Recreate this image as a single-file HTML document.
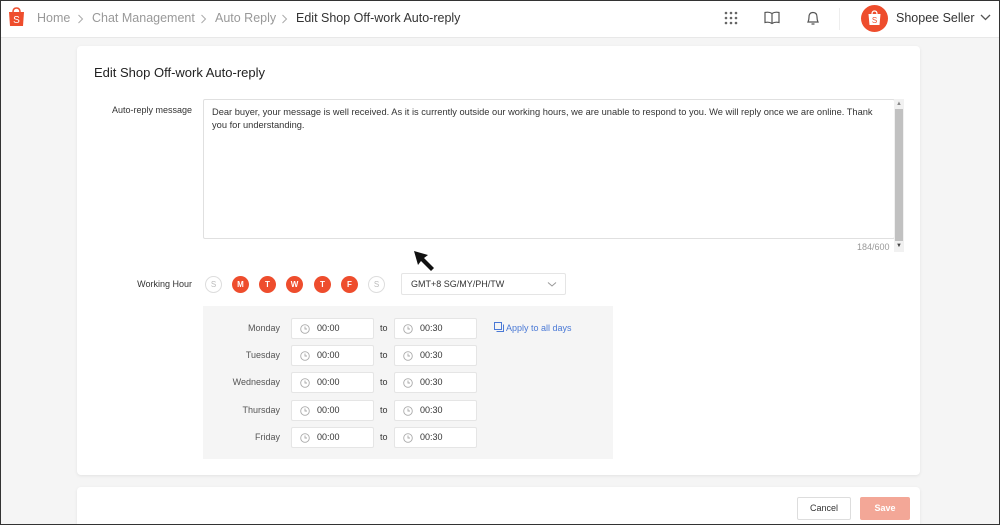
<!DOCTYPE html>
<html><head><meta charset="utf-8"><style>
*{margin:0;padding:0;box-sizing:border-box}
html,body{width:1000px;height:525px;overflow:hidden}
body{background:#f5f5f5;font-family:"Liberation Sans",Arial,sans-serif;position:relative}
.a{position:absolute}
.hdr{left:0;top:0;width:1000px;height:38px;background:#fff;border-bottom:1px solid #e8e8e8}
.bc{top:11px;font-size:12.5px;color:#999}
.chev{top:11px;font-size:12px;color:#aaa}
.card{background:#fff;border-radius:4px;box-shadow:0 1px 3px rgba(0,0,0,.08)}
.lbl{font-size:9px;color:#333;text-align:right;width:110px}
.d{width:17px;height:17px;border-radius:50%;font-size:8px;font-weight:bold;text-align:center;line-height:17px;color:#fff;background:#ee4d2d;top:276px}
.d.o{background:#fff;border:1px solid #ddd;color:#bbb;font-weight:normal;line-height:15px}
.inp{width:83px;height:21px;background:#fff;border:1px solid #e5e5e5;border-radius:2px;font-size:9px;color:#333;line-height:19px;padding-left:25px}
.inp svg{position:absolute;left:8px;top:5px}
.day{font-size:9px;color:#555;text-align:right;width:80px;left:200px}
.to{font-size:9px;color:#333;left:380px}
.frame{left:0;top:0;width:1000px;height:525px;border:1px solid #333;pointer-events:none}
</style></head><body>
<div class="a hdr"></div>
<svg class="a" style="left:8px;top:7px" width="17" height="20" viewBox="0 0 17 20"><path d="M5 5 Q5 1 8.5 1 Q12 1 12 5" fill="none" stroke="#ee4d2d" stroke-width="1.5"/><path d="M1 5 H16 L15 19 H2 Z" fill="#ee4d2d"/><text x="8.5" y="16" font-size="10" fill="#fff" text-anchor="middle" font-family="Liberation Sans">S</text></svg>
<div class="a bc" style="left:37px">Home</div>
<svg class="a" style="left:77px;top:14px" width="7" height="10"><path d="M1.5 1 L5.5 5 L1.5 9" fill="none" stroke="#aaa" stroke-width="1"/></svg>
<div class="a bc" style="left:92px">Chat Management</div>
<svg class="a" style="left:200px;top:14px" width="7" height="10"><path d="M1.5 1 L5.5 5 L1.5 9" fill="none" stroke="#aaa" stroke-width="1"/></svg>
<div class="a bc" style="left:215px">Auto Reply</div>
<svg class="a" style="left:281px;top:14px" width="7" height="10"><path d="M1.5 1 L5.5 5 L1.5 9" fill="none" stroke="#aaa" stroke-width="1"/></svg>
<div class="a bc" style="left:296px;color:#333">Edit Shop Off-work Auto-reply</div>
<svg class="a" style="left:724px;top:11px" width="14" height="14"><g fill="#666"><circle cx="2" cy="2" r="1.3"/><circle cx="7" cy="2" r="1.3"/><circle cx="12" cy="2" r="1.3"/><circle cx="2" cy="7" r="1.3"/><circle cx="7" cy="7" r="1.3"/><circle cx="12" cy="7" r="1.3"/><circle cx="2" cy="12" r="1.3"/><circle cx="7" cy="12" r="1.3"/><circle cx="12" cy="12" r="1.3"/></g></svg>
<svg class="a" style="left:764px;top:11px" width="16" height="14"><path d="M1 1.5 Q5 0.5 8 2.5 Q11 0.5 15 1.5 V11.5 Q11 10.5 8 12.5 Q5 10.5 1 11.5 Z M8 2.5 V12.5" fill="none" stroke="#555" stroke-width="1.2"/></svg>
<svg class="a" style="left:806px;top:10px" width="14" height="16"><path d="M2 12 Q3 10 3 7 Q3 2.5 7 2.5 Q11 2.5 11 7 Q11 10 12 12 Z M5.5 14 H8.5" fill="none" stroke="#555" stroke-width="1.2"/></svg>
<div class="a" style="left:839px;top:8px;width:1px;height:22px;background:#eee"></div>
<div class="a" style="left:861px;top:5px;width:27px;height:27px;border-radius:50%;background:#ee4d2d"></div>
<svg class="a" style="left:867px;top:10px" width="15" height="16"><path d="M5 4 Q5 1 7.5 1 Q10 1 10 4" fill="none" stroke="#fff" stroke-width="1.2"/><path d="M1.5 4 H13.5 L12.5 15 H2.5 Z" fill="#fff"/><text x="7.5" y="13" font-size="8" fill="#ee4d2d" text-anchor="middle" font-family="Liberation Sans">S</text></svg>
<div class="a" style="left:896px;top:11px;font-size:12.5px;color:#333">Shopee Seller</div>
<svg class="a" style="left:980px;top:14px" width="11" height="8"><path d="M1 1 L5.5 5.5 L10 1" fill="none" stroke="#555" stroke-width="1.3"/></svg>

<div class="a card" style="left:77px;top:46px;width:843px;height:429px"></div>
<div class="a" style="left:94px;top:65px;font-size:13px;color:#222">Edit Shop Off-work Auto-reply</div>
<div class="a lbl" style="left:82px;top:105px">Auto-reply message</div>
<div class="a" style="left:203px;top:99px;width:692px;height:140px;border:1px solid #e0e0e0;border-radius:2px;padding:6px 8px;font-size:9.3px;line-height:13px;color:#333">Dear buyer, your message is well received. As it is currently outside our working hours, we are unable to respond to you. We will reply once we are online. Thank you for understanding.</div>
<div class="a" style="left:894px;top:99px;width:10px;height:153px;background:#f1f1f1"></div>
<div class="a" style="left:895px;top:109px;width:8px;height:132px;background:#c1c1c1"></div>
<div class="a" style="left:896px;top:101px;font-size:6px;color:#888">▲</div>
<div class="a" style="left:896px;top:243px;font-size:6px;color:#444">▼</div>
<div class="a" style="left:857px;top:242px;font-size:9px;color:#999">184/600</div>
<svg class="a" style="left:412px;top:249px" width="26" height="26"><path d="M2 2 L16 6 L12 9 L22 19 L19 22 L9 12 L6 16 Z" fill="#111"/></svg>

<div class="a lbl" style="left:82px;top:279px">Working Hour</div>
<div class="a d o" style="left:205px">S</div>
<div class="a d" style="left:232px">M</div>
<div class="a d" style="left:259px">T</div>
<div class="a d" style="left:286px">W</div>
<div class="a d" style="left:314px">T</div>
<div class="a d" style="left:341px">F</div>
<div class="a d o" style="left:368px">S</div>
<div class="a" style="left:401px;top:273px;width:165px;height:22px;border:1px solid #e5e5e5;border-radius:2px;font-size:9px;color:#333;line-height:20px;padding-left:9px">GMT+8 SG/MY/PH/TW</div>
<svg class="a" style="left:547px;top:281px" width="10" height="7"><path d="M1 1.5 L5 5 L9 1.5" fill="none" stroke="#999" stroke-width="1"/></svg>

<div class="a" style="left:203px;top:306px;width:410px;height:153px;background:#f5f5f5"></div>
<svg width="0" height="0" style="position:absolute"><defs><g id="clk"><circle cx="5" cy="5" r="4.3" fill="none" stroke="#aaa" stroke-width="0.9"/><path d="M5 2.5 V5 H7" fill="none" stroke="#aaa" stroke-width="0.9"/></g></defs></svg>

<div class="a day" style="top:323px">Monday</div>
<div class="a inp" style="left:291px;top:318px"><svg width="10" height="10"><use href="#clk"/></svg>00:00</div>
<div class="a to" style="top:323px">to</div>
<div class="a inp" style="left:394px;top:318px"><svg width="10" height="10"><use href="#clk"/></svg>00:30</div>
<svg class="a" style="left:494px;top:322px" width="10" height="10"><rect x="0.5" y="0.5" width="7" height="7" fill="none" stroke="#4a79d6"/><path d="M2.5 9.5 H9.5 V2.5" fill="none" stroke="#4a79d6"/></svg>
<div class="a" style="left:506px;top:323px;font-size:9px;color:#4a79d6">Apply to all days</div>

<div class="a day" style="top:350px">Tuesday</div>
<div class="a inp" style="left:291px;top:345px"><svg width="10" height="10"><use href="#clk"/></svg>00:00</div>
<div class="a to" style="top:350px">to</div>
<div class="a inp" style="left:394px;top:345px"><svg width="10" height="10"><use href="#clk"/></svg>00:30</div>

<div class="a day" style="top:377px">Wednesday</div>
<div class="a inp" style="left:291px;top:372px"><svg width="10" height="10"><use href="#clk"/></svg>00:00</div>
<div class="a to" style="top:377px">to</div>
<div class="a inp" style="left:394px;top:372px"><svg width="10" height="10"><use href="#clk"/></svg>00:30</div>

<div class="a day" style="top:405px">Thursday</div>
<div class="a inp" style="left:291px;top:400px"><svg width="10" height="10"><use href="#clk"/></svg>00:00</div>
<div class="a to" style="top:405px">to</div>
<div class="a inp" style="left:394px;top:400px"><svg width="10" height="10"><use href="#clk"/></svg>00:30</div>

<div class="a day" style="top:432px">Friday</div>
<div class="a inp" style="left:291px;top:427px"><svg width="10" height="10"><use href="#clk"/></svg>00:00</div>
<div class="a to" style="top:432px">to</div>
<div class="a inp" style="left:394px;top:427px"><svg width="10" height="10"><use href="#clk"/></svg>00:30</div>

<div class="a card" style="left:77px;top:487px;width:843px;height:50px"></div>
<div class="a" style="left:797px;top:497px;width:54px;height:23px;border:1px solid #ddd;border-radius:2px;background:#fff;font-size:9px;color:#333;text-align:center;line-height:21px">Cancel</div>
<div class="a" style="left:860px;top:497px;width:50px;height:23px;border-radius:2px;background:#f3a797;font-size:9px;font-weight:bold;color:#fff;text-align:center;line-height:23px">Save</div>
<div class="a frame"></div>
</body></html>
